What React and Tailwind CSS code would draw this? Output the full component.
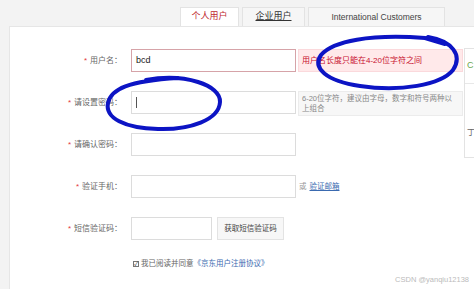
import React from 'react';

const FONT = { fontFamily: '"Liberation Sans", "Noto Sans CJK SC", sans-serif' };

const Label = ({ children }) => (
  <div className="w-[113px] shrink-0 text-right text-[8px] leading-[23px] text-[#666] pr-[1px]">
    <span className="text-[#e4393c] mr-[3px]">*</span>
    {children}：
  </div>
);

const Row = ({ label, input, children }) => (
  <div className="flex items-start h-[23px]">
    <Label>{label}</Label>
    <div className="ml-[8px] flex items-start">
      {input}
      {children}
    </div>
  </div>
);

const Input = ({ className = '', children }) => (
  <div className={`h-[23px] border bg-white flex items-center px-[4px] ${className}`}>{children}</div>
);

const App = () => {
  return (
    <div className="relative w-[474px] h-[289px] overflow-hidden bg-[#f3f3f3]" style={FONT}>
      {/* Tabs */}
      <div className="flex items-end h-[26px] pl-[180px] gap-[3px]">
        <div className="w-[59px] h-[19px] bg-white border border-b-0 border-[#e3e3e3] flex items-center justify-center text-[9px] text-[#c0282e]">
          个人用户
        </div>
        <div className="w-[63px] h-[19px] bg-[#f6f6f6] border border-b-0 border-[#e3e3e3] flex items-center justify-center text-[9px] text-[#333] underline">
          企业用户
        </div>
        <div className="w-[137px] h-[19px] bg-[#f6f6f6] border border-b-0 border-[#e3e3e3] flex items-center justify-center text-[8.5px] text-[#444]">
          International Customers
        </div>
      </div>

      {/* Panel */}
      <div className="ml-[9px] h-[280px] bg-white border-l border-t border-[#e6e6e6] flex">
        <div className="w-[454px] shrink-0 pt-[22px] flex flex-col gap-[19px]">
          <Row label="用户名" input={<Input className="w-[165px] border-[#d6a3a8] text-[9px] text-[#222]">bcd</Input>}>
            <div className="ml-[2px] w-[165px] h-[23px] bg-[#ffe9ea] border border-[#fbd9dc] flex items-center pl-[3px] text-[8px] text-[#c8102e]">
              用户名长度只能在4-20位字符之间
            </div>
          </Row>
          <Row label="请设置密码" input={<Input className="w-[165px] border-[#dcdcdc]"><span className="w-px h-[11px] bg-[#555]" /></Input>}>
            <div className="ml-[2px] w-[165px] h-[25px] bg-[#f7f7f7] border border-[#ececec] px-[3px] pt-[2px] text-[7.5px] leading-[9.5px] text-[#888]">
              6-20位字符，建议由字母，数字和符号两种以上组合
            </div>
          </Row>
          <Row label="请确认密码" input={<Input className="w-[165px] border-[#dcdcdc]" />} />
          <Row label="验证手机" input={<Input className="w-[165px] border-[#dcdcdc]" />}>
            <div className="ml-[3px] h-[23px] flex items-center text-[7.5px] text-[#999]">
              或<span className="ml-[3px] text-[#3a6ab0] underline">验证邮箱</span>
            </div>
          </Row>
          <Row label="短信验证码" input={<Input className="w-[81px] border-[#dcdcdc]" />}>
            <div className="ml-[5px] w-[67px] h-[23px] bg-[#f7f7f7] border border-[#e3e3e3] flex items-center justify-center text-[7.5px] text-[#444]">
              获取短信验证码
            </div>
          </Row>
          <div className="flex items-center pl-[123px] -mt-[1px] text-[7.5px] text-[#666]">
            <span className="w-[6px] h-[6px] border border-[#777] bg-white flex items-center justify-center text-[6px] leading-none text-[#333] mr-[2px]">✓</span>
            我已阅读并同意
            <span className="text-[#3a6ab0]">《京东用户注册协议》</span>
          </div>
        </div>

        {/* Side box */}
        <div className="mt-[21px] w-[40px] h-[110px] border border-[#e3e3e3] bg-white flex flex-col">
          <div className="h-[35px] border-b border-[#e8e8e8] flex items-center pl-[2px] text-[9px] text-[#6aa84f]">C</div>
          <div className="flex-1 flex items-end pb-[18px] pl-[2px] text-[8px] text-[#666]">丁</div>
        </div>
      </div>

      {/* watermark */}
      <div className="absolute right-[5px] bottom-[4px] text-[7.5px] text-[#bbb]">CSDN @yanqiu12138</div>

      {/* hand-drawn marks */}
      <svg className="absolute inset-0 pointer-events-none" width="474" height="289" viewBox="0 0 474 289">
        <path
          d="M428 37 C452 41 463 55 453 70 C441 85 400 92 360 86 C326 81 312 68 321 55 C333 41 370 34 425 38 L445 44"
          fill="none"
          stroke="#0c14c4"
          strokeWidth="4"
          strokeLinecap="round"
        />
        <path
          d="M146 80 C185 73 221 85 220 102 C219 120 190 130 158 129 C124 128 105 118 108 103 C111 89 128 81 178 78"
          fill="none"
          stroke="#0c14c4"
          strokeWidth="4"
          strokeLinecap="round"
        />
      </svg>
    </div>
  );
};

export default App;
